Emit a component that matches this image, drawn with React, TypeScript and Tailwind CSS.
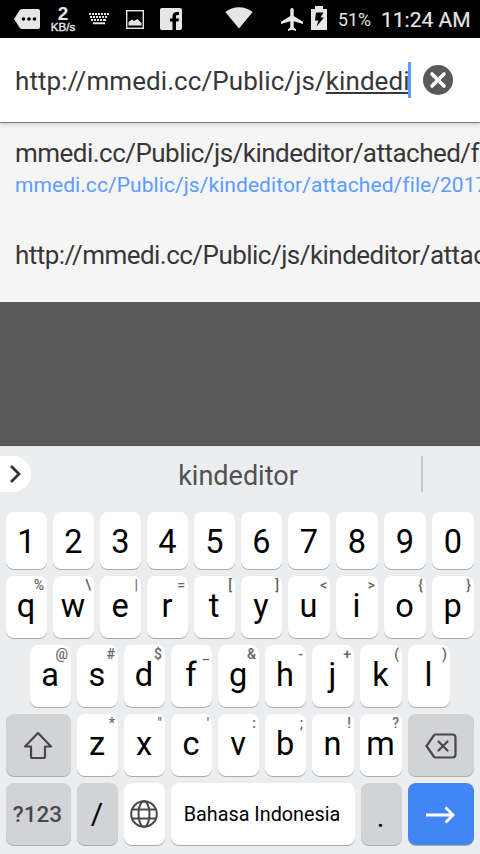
import clsx from 'clsx';

type KeyProps = {
  label: string;
  hint?: string;
  className?: string;
};

const Key = ({label, hint, className = 'w-[41px]'}: KeyProps) => {
  return (
    <button
      className={clsx(
        'relative flex h-full shrink-0 items-center justify-center rounded-lg bg-white text-[32.5px] leading-none text-black shadow-[0_1px_0_#a9abae]',
        hint ? 'pb-[2px] pr-px' : 'pt-[4px]',
        className,
      )}
    >
      {label}
      {hint && (
        <span className="absolute right-[3px] top-[2px] text-[14px] font-medium leading-[14px] text-[#666]">
          {hint}
        </span>
      )}
    </button>
  );
};

const topRow = ['q%', 'w\\', 'e|', 'r=', 't[', 'y]', 'u<', 'i>', 'o{', 'p}'];
const homeRow = ['a@', 's#', 'd$', 'f_', 'g&', 'h-', 'j+', 'k(', 'l)'];
const bottomRow = ['z*', 'x"', "c'", 'v:', 'b;', 'n!', 'm?'];

// Columns right of the sixth are one pixel wider
const width = (index: number, wideFrom: number) =>
  index >= wideFrom ? 'w-[42px]' : 'w-[41px]';

const StatusBar = () => {
  return (
    <header className="flex h-[38px] shrink-0 items-center bg-black text-[#e6e6e6]">
      <svg className="ml-[14px] h-5 w-[26px]" viewBox="0 0 26 20">
        <path d="M0 10 5.5 1.5Q6.5 0 8.500 0H24Q26 0 26 2V18Q26 20 24 20H8.500Q6.500 20 5.500 18.500Z" fill="#e6e6e6" />
        <circle cx="9.500" cy="10" r="1.800" />
        <circle cx="15" cy="10" r="1.800" />
        <circle cx="20.500" cy="10" r="1.800" />
      </svg>
      <div className="ml-[9px] flex w-[28px] flex-col items-center pt-px font-['Liberation_Sans',sans-serif]">
        <span className="text-[19px] font-bold leading-[15px]">2</span>
        <span className="text-[11.5px] leading-[12px] [-webkit-text-stroke:0.4px_#e6e6e6]">KB/s</span>
      </div>
      <svg className="ml-3 h-3 w-5" viewBox="0 0 20 12" fill="#e6e6e6">
        <path d="M0 0h2v2H0zM3 0h2v2H3zM6 0h2v2H6zM9 0h2v2H9zM12 0h2v2h-2zM15 0h2v2h-2zM18 0h2v2h-2zM1 3h2v2H1zM4 3h2v2H4zM7 3h2v2H7zM10 3h2v2h-2zM13 3h2v2h-2zM16 3h2v2h-2zM2 6h2v2H2zM5 6h2v2H5zM8 6h2v2H8zM11 6h2v2h-2zM14 6h3v2h-3zM4 9.200h12v2H4z" />
      </svg>
      <svg className="ml-[17px] h-[19px] w-[18px]" viewBox="0 0 18 19">
        <rect x=".7" y=".7" width="16.600" height="17.600" fill="none" stroke="#e6e6e6" strokeWidth="1.400" />
        <path d="M2.500 15.500V12L6 9.500 8 11 11.500 9 15.500 13v2.500Z" fill="#e6e6e6" />
      </svg>
      <svg className="ml-4 h-[22px] w-[22px]" viewBox="0 0 22 22">
        <rect width="22" height="22" rx="2" fill="#e6e6e6" />
        <path d="M12.500 22v-8.500H10V10.500h2.500V8.500C12.500 5.500 14 4 17 4H19v3h-1.500C16.500 7 16 7.500 16 8.500v2h3l-.5 3H16V22Z" fill="#000" />
      </svg>
      <svg className="ml-[43px] h-[22px] w-[28px] -translate-y-px" viewBox="0 0 28 22">
        <path d="M14 21.500.300 5C8 -1.300 20 -1.300 27.700 5Z" fill="#e6e6e6" />
      </svg>
      <svg className="ml-[28px] h-[23px] w-[22px]" viewBox="2 2 19 20" preserveAspectRatio="none" fill="#e6e6e6">
        <path d="M21 16v-2l-8-5V3.500a1.500 1.500 0 0 0-3 0V9l-8 5v2l8-2.500V19l-2 1.500V22l3.500-1 3.500 1v-1.500L13 19v-5.500Z" />
      </svg>
      <svg className="ml-2 h-6 w-4 -translate-y-px" viewBox="0 0 16 24">
        <path d="M4 0h8v3h4v21H0V3h4Z" fill="#e6e6e6" />
        <path d="M5 6.500h7.500L9.500 11.500H13L5.500 20.500 7.500 14.500H4Z" fill="#000" />
      </svg>
      <span className="ml-[11px] w-[33px] pt-[3px] text-[17.700px] leading-none">51%</span>
      <span className="ml-[10px] whitespace-nowrap pt-[3px] text-[21px] leading-none [-webkit-text-stroke:0.2px_#e6e6e6]">11:24 AM</span>
    </header>
  );
};

const AddressBar = () => {
  return (
    <div className="relative z-10 flex h-[85px] shrink-0 items-center border-b border-[#808080] bg-white pl-[15px] shadow-[0_1px_5px_rgba(0,0,0,0.2)]">
      <div className="flex h-9 items-center whitespace-nowrap text-[26px] leading-[36px] tracking-[0.08px] text-[#373737]">
        <span className="pt-[2px]">http://mmedi.cc/Public/js/</span>
        <span className="pt-[2px] underline decoration-[1.5px] underline-offset-[2px] [text-decoration-skip-ink:none]">kindedi</span>
        <span className="-ml-[2px] h-9 w-[3px] bg-[#5c9bff]" />
      </div>
      <svg className="ml-3 h-[30px] w-[30px]" viewBox="0 0 30 30">
        <circle cx="15" cy="15" r="15" fill="#595959" />
        <path d="m9 9 12 12M21 9 9 21" stroke="#fff" strokeWidth="3.600" strokeLinecap="round" />
      </svg>
    </div>
  );
};

const Suggestions = () => {
  return (
    <div className="h-[179px] shrink-0 overflow-hidden whitespace-nowrap bg-[#f5f5f5] pl-[15px] pt-[14px] text-[26px] leading-[32px] tracking-[-0.53px] text-[#373737]">
      <p>mmedi.cc/Public/js/kindeditor/attached/file/2017</p>
      <p className="text-[21px] tracking-[0.07px] text-[#5c9bff]">
        mmedi.cc/Public/js/kindeditor/attached/file/2017
      </p>
      <p className="mt-[38px]">http://mmedi.cc/Public/js/kindeditor/attached</p>
    </div>
  );
};

const Keyboard = () => {
  return (
    <div className="h-[408px] shrink-0 bg-[#ecedef]">
      <div className="flex h-[66px] items-start pt-[10px]">
        <div className="flex h-9 w-[31px] items-center rounded-r-full bg-white">
          <svg className="ml-[9px] h-[18px] w-3" viewBox="0 0 12 18">
            <path d="m2 1 8 8-8 8" fill="none" stroke="#333" strokeWidth="2.800" />
          </svg>
        </div>
        <div className="w-[390px] pl-[24px] text-center text-[27px] leading-[41px] text-[#505153]">kindeditor</div>
        <div className="h-9 w-[2px] bg-[#c3c4c6]" />
      </div>
      <div className="flex flex-col gap-[7px] px-[6px]">
        <div className="flex h-[57px] gap-[6px]">
          {'1234567890'.split('').map((digit, i) => (
            <Key key={digit} label={digit} className={width(i, 6)} />
          ))}
        </div>
        <div className="flex h-[62px] gap-[6px]">
          {topRow.map((k, i) => (
            <Key key={k} label={k[0]} hint={k[1]} className={width(i, 6)} />
          ))}
        </div>
        <div className="flex h-[62px] gap-[6px] pl-6">
          {homeRow.map((k, i) => (
            <Key key={k} label={k[0]} hint={k[1]} className={width(i, 6)} />
          ))}
        </div>
        <div className="flex h-[62px] gap-[6px]">
          <button className="flex w-[65px] items-center justify-center rounded-lg bg-[#d2d3d7] shadow-[0_1px_0_#a9abae]">
            <svg className="-ml-[2px] h-[29px] w-[30px]" viewBox="0 0 30 29">
              <path d="M15 2 28 15.500H22V25.500Q22 27 20.500 27H9.500Q8 27 8 25.500V15.500H2Z" fill="none" stroke="#484848" strokeWidth="2.200" strokeLinejoin="round" />
            </svg>
          </button>
          {bottomRow.map((k, i) => (
            <Key key={k} label={k[0]} hint={k[1]} className={width(i, 5)} />
          ))}
          <button className="flex w-[66px] items-center justify-center rounded-lg bg-[#d2d3d7] shadow-[0_1px_0_#a9abae]">
            <svg className="-ml-px mt-[2px] h-[26px] w-8" viewBox="0 0 32 26">
              <path d="M10.500 1.500H27.500Q30.500 1.500 30.500 4.500V21.500Q30.500 24.500 27.500 24.500H10.500Q9.500 24.500 8.800 23.500L1.500 13 8.800 2.500Q9.500 1.500 10.500 1.500Z" fill="none" stroke="#484848" strokeWidth="2.200" />
              <path d="m13.500 8.500 9 9M22.500 8.500l-9 9" stroke="#484848" strokeWidth="2.200" strokeLinecap="round" />
            </svg>
          </button>
        </div>
        <div className="flex h-[62px] gap-[6px] text-black">
          <button className="w-[65px] rounded-lg bg-[#d2d3d7] pr-[2px] text-[22.5px] font-medium leading-none text-[#48494b] shadow-[0_1px_0_#a9abae]">
            ?123
          </button>
          <button className="w-[41px] rounded-lg bg-[#d2d3d7] pr-px text-[30px] leading-none shadow-[0_1px_0_#a9abae]">/</button>
          <button className="flex w-[41px] items-center justify-center rounded-lg bg-white shadow-[0_1px_0_#a9abae]">
            <svg className="-ml-px h-7 w-7" viewBox="0 0 28 28" fill="none" stroke="#484848" strokeWidth="2">
              <circle cx="14" cy="14" r="12.800" />
              <ellipse cx="14" cy="14" rx="5.500" ry="12.800" />
              <path d="M3 9.500h22M3 18.500h22" />
            </svg>
          </button>
          <button className="w-[184px] whitespace-nowrap rounded-lg bg-white pr-[2px] pt-[2px] text-[19.8px] leading-none shadow-[0_1px_0_#a9abae]">
            Bahasa Indonesia
          </button>
          <button className="w-[41px] rounded-lg bg-[#d2d3d7] pr-[2px] pt-[7px] text-[29px] leading-none shadow-[0_1px_0_#a9abae]">.</button>
          <button className="flex w-[66px] items-center justify-center rounded-lg bg-[#4285f5] shadow-[0_1px_0_#a9abae]">
            <svg className="ml-[-2px] mt-px h-[18px] w-[29px]" viewBox="0 0 29 18">
              <path d="M0 9h27M19.500 1.500 27 9l-7.500 7.500" fill="none" stroke="#fff" strokeWidth="2.800" />
            </svg>
          </button>
        </div>
      </div>
    </div>
  );
};

const App = () => {
  return (
    <main className="flex h-[854px] w-[480px] flex-col overflow-hidden bg-[#595959] font-[Roboto,sans-serif]">
      <StatusBar />
      <AddressBar />
      <Suggestions />
      <div className="flex-1 border-b border-[#505050]" />
      <Keyboard />
    </main>
  );
};

export default App;
